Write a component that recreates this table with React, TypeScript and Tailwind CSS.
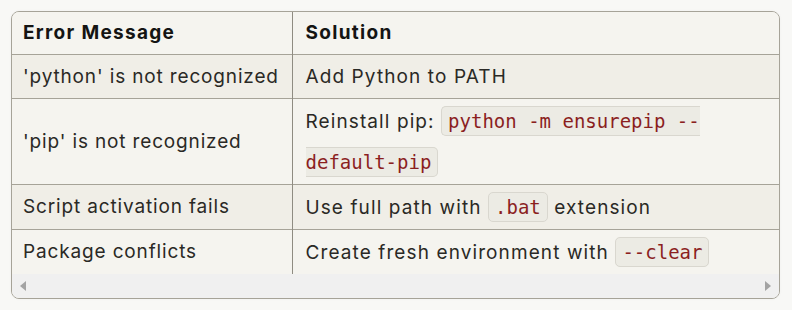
const rows = [
    { error: "'python' is not recognized", solution: <>Add Python to PATH</> },
    {
        error: "'pip' is not recognized",
        solution: (
            <>
                Reinstall pip: <Code>python -m ensurepip --<br />default-pip</Code>
            </>
        ),
    },
    { error: 'Script activation fails', solution: <>Use full path with <Code>.bat</Code> extension</> },
    { error: 'Package conflicts', solution: <>Create fresh environment with <Code>--clear</Code></> },
];

function Code({ children }: { children: React.ReactNode }) {
    return (
        <code
            className="rounded-[5px] border border-[#d9d7cf] bg-[#ecebe4] px-[6px] py-[3px] text-[19px] tracking-normal text-[#8b1f1f] [box-decoration-break:slice]"
            style={{ fontFamily: '"DejaVu Sans Mono", monospace' }}
        >
            {children}
        </code>
    );
}

export default function App() {
    return (
        <div className="min-h-[310px] bg-[#f8f8f6] pt-[11px] pl-[11px] pr-[12px]" style={{ fontFamily: 'Inter, sans-serif' }}>
            <div className="overflow-hidden rounded-lg border border-[#a6a398] bg-[#f5f4ef] shadow-[0_0_3px_rgba(0,0,0,0.04)]">
                <table className="w-full border-collapse text-[19px] leading-[40px] tracking-[0.85px] text-[#2a2925]">
                    <thead>
                        <tr className="bg-[#f5f4ef]">
                            <th className="w-[280px] whitespace-nowrap border-r border-[#8f8c82] py-[1px] pl-[11px] pr-[10px] text-left font-bold tracking-[1.3px] text-[#141413]">Error Message</th>
                            <th className="py-[1px] pl-[13px] pr-3 text-left font-bold tracking-[1.3px] text-[#141413]">Solution</th>
                        </tr>
                    </thead>
                    <tbody>
                        {rows.map((r, i) => (
                            <tr key={i} className={`border-t border-[#a6a398] ${i % 2 === 0 ? 'bg-[#f0eee7]' : 'bg-[#f5f4ef]'}`}>
                                <td className="whitespace-nowrap border-r border-[#8f8c82] py-[1.5px] pl-[11px] pr-[10px] align-middle">{r.error}</td>
                                <td className="py-[1.5px] pl-[13px] pr-3 align-middle tracking-[1.1px]">{r.solution}</td>
                            </tr>
                        ))}
                    </tbody>
                </table>
                {/* horizontal scrollbar */}
                <div className="flex h-[24px] items-center justify-between bg-[#f0f0f0] px-[8px]">
                    <svg width="7" height="10" viewBox="0 0 7 10">
                        <path d="M6 0 L0 5 L6 10 Z" fill="#a3a3a3" />
                    </svg>
                    <svg width="7" height="10" viewBox="0 0 7 10">
                        <path d="M1 0 L7 5 L1 10 Z" fill="#a3a3a3" />
                    </svg>
                </div>
            </div>
        </div>
    );
}
